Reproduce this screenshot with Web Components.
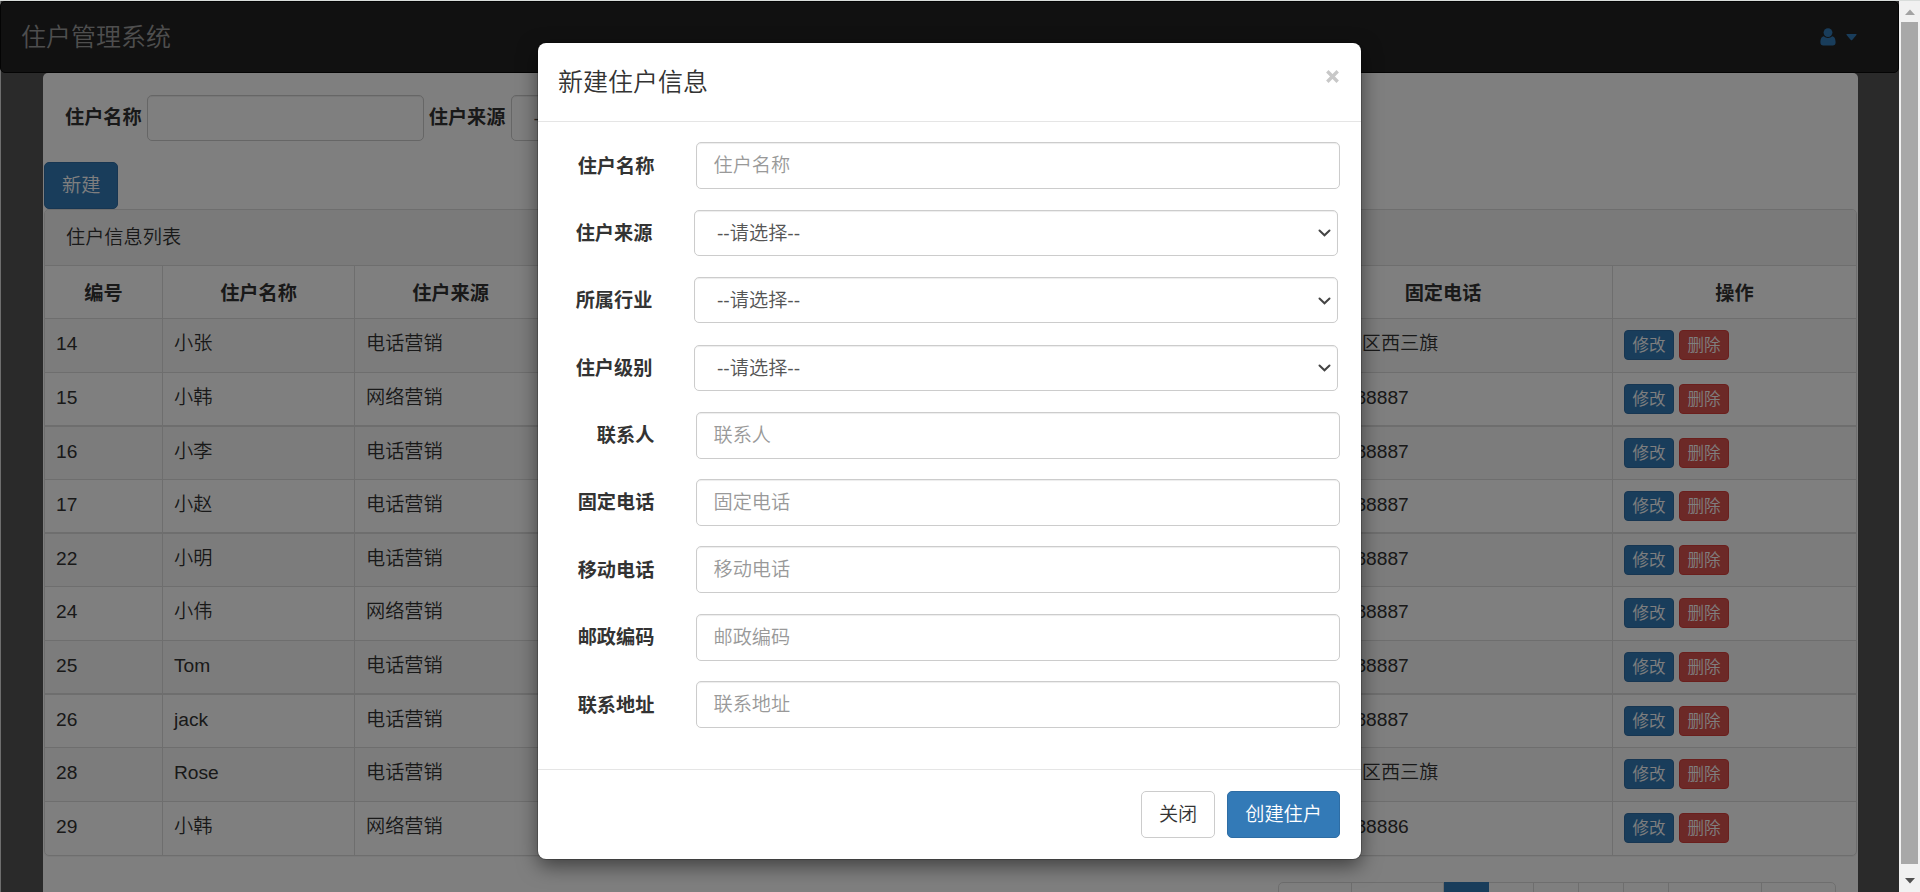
<!DOCTYPE html>
<html lang="zh-CN">
<head>
<meta charset="UTF-8">
<title>住户管理系统</title>
<style>
    html, body {
        margin: 0;
        height: 100%;
        overflow: hidden;
    }
    body {
        font-family: "Liberation Sans", "Noto Sans CJK SC", sans-serif;
        font-size: 19.2px;
        font-weight: 350;
        line-height: 27px;
        color: #333;
    }
</style>
</head>
<body>
<resident-app></resident-app>

<script>
class NavBar extends HTMLElement {
    connectedCallback() {
        this.attachShadow({ mode: 'open' });
        this.shadowRoot.innerHTML = `
            <style>
                :host {
                    display: flex;
                    flex: none;
                    align-items: center;
                    justify-content: space-between;
                    box-sizing: border-box;
                    height: 72px;
                    padding: 0 41px 0 20px;
                    background: #222;
                    border: 1px solid #080808;
                    border-radius: 5px;
                }
                .brand {
                    font-size: 25px;
                    color: #9d9d9d;
                }
                .user {
                    display: flex;
                    align-items: center;
                    gap: 10px;
                }
                svg {
                    display: block;
                    fill: #337ab7;
                }
            </style>
            <span class="brand"><slot></slot></span>
            <span class="user">
                <svg width="16" height="18" viewBox="0 0 16 18">
                    <circle cx="8" cy="4.6" r="4.4"/>
                    <path d="M3.9 8.2C1.2 8.6.4 11.3.4 14.2.4 16.4 1.5 17.5 3.3 17.5H12.7C14.5 17.5 15.6 16.4 15.6 14.2 15.6 11.3 14.8 8.6 12.1 8.2 11 9.3 9.6 9.9 8 9.9S5 9.3 3.9 8.2Z"/>
                </svg>
                <svg width="11" height="7" viewBox="0 0 11 7"><path d="M1 0h9q1 0 .4.9L6.2 6q-.7.6-1.4 0L.6.9Q0 0 1 0Z"/></svg>
            </span>
        `;
    }
}

class AppButton extends HTMLElement {
    connectedCallback() {
        this.attachShadow({ mode: 'open' });
        this.shadowRoot.innerHTML = `
            <style>
                :host {
                    display: inline-flex;
                }
                button {
                    box-sizing: border-box;
                    height: 47px;
                    padding: 0 17px;
                    font: inherit;
                    line-height: 1;
                    white-space: nowrap;
                    color: #333;
                    background: #fff;
                    border: 1px solid #ccc;
                    border-radius: 5px;
                }
                :host([kind="primary"]) button {
                    color: #fff;
                    background: #337ab7;
                    border-color: #2e6da4;
                }
                :host([kind="danger"]) button {
                    color: #fff;
                    background: #d9534f;
                    border-color: #d43f3a;
                }
                :host([size="xs"]) button {
                    width: 50px;
                    height: 30px;
                    padding: 0;
                    font-size: 16.5px;
                    border-radius: 4px;
                }
            </style>
            <button type="button"><slot></slot></button>
        `;
    }
}

class TextField extends HTMLElement {
    connectedCallback() {
        const hint = this.getAttribute('placeholder') || '';
        this.attachShadow({ mode: 'open' });
        this.shadowRoot.innerHTML = `
            <style>
                :host {
                    display: block;
                }
                input {
                    display: block;
                    box-sizing: border-box;
                    width: 100%;
                    height: var(--field-height, 47px);
                    padding: 1px 16.5px 0;
                    font: inherit;
                    color: #555;
                    background: #fff;
                    border: 1px solid #ccc;
                    border-radius: 5px;
                    box-shadow: inset 0 1px 1px rgba(0, 0, 0, .075);
                }
                input::placeholder {
                    color: #999;
                }
            </style>
            <input type="text" placeholder="${hint}">
        `;
    }
}

class SelectField extends HTMLElement {
    connectedCallback() {
        this.attachShadow({ mode: 'open' });
        this.shadowRoot.innerHTML = `
            <style>
                :host {
                    display: grid;
                    align-items: center;
                }
                select, svg {
                    grid-area: 1 / 1;
                }
                select {
                    appearance: none;
                    box-sizing: border-box;
                    width: 100%;
                    height: 46px;
                    padding: 1px 22px 0;
                    font: inherit;
                    color: #555;
                    background: #fff;
                    border: 1px solid #ccc;
                    border-radius: 5px;
                    box-shadow: inset 0 1px 1px rgba(0, 0, 0, .075);
                }
                svg {
                    justify-self: end;
                    margin: 1px 7px 0 0;
                    fill: none;
                    stroke: #444;
                    stroke-width: 2;
                    stroke-linecap: round;
                }
            </style>
            <select><option>--请选择--</option></select>
            <svg width="13" height="8" viewBox="0 0 13 8"><path d="M1.5 1.5 6.5 6.3 11.5 1.5"/></svg>
        `;
    }
}

class FormRow extends HTMLElement {
    connectedCallback() {
        this.attachShadow({ mode: 'open' });
        this.shadowRoot.innerHTML = `
            <style>
                :host {
                    display: grid;
                    grid-template-columns: 95.4px 644px;
                    column-gap: 41.6px;
                    align-items: center;
                    height: 47px;
                }
                /* select rows sit two pixels to the left of the inputs */
                :host([shifted]) {
                    margin-left: -2px;
                }
                label {
                    padding-top: 1px;
                    font-weight: 700;
                    text-align: right;
                }
            </style>
            <label>${this.getAttribute('label')}</label>
            <slot></slot>
        `;
    }
}

class SearchBar extends HTMLElement {
    connectedCallback() {
        this.attachShadow({ mode: 'open' });
        this.shadowRoot.innerHTML = `
            <style>
                :host {
                    --field-height: 46px;
                    display: flex;
                    align-items: center;
                    padding: 22px 20px 0 21px;
                    height: 46px;
                }
                label {
                    font-weight: 700;
                    margin-right: 5px;
                    padding-bottom: 2px;
                }
                text-field {
                    width: 277px;
                    margin-right: 5px;
                }
                select-field {
                    width: 200px;
                }
            </style>
            <label>住户名称</label><text-field></text-field>
            <label>住户来源</label><select-field></select-field>
        `;
    }
}

class ResidentTable extends HTMLElement {
    connectedCallback() {
        const area = '北京昌平区西三旗';
        const tel = '010-88888887';
        // id, name, source, phone, row height, bottom border
        const rows = [
            [14, '小张', '电话营销', area, 54, 1],
            [15, '小韩', '网络营销', tel, 54, 2],
            [16, '小李', '电话营销', tel, 53, 1],
            [17, '小赵', '电话营销', tel, 54, 2],
            [22, '小明', '电话营销', tel, 53, 1],
            [24, '小伟', '网络营销', tel, 54, 1],
            [25, 'Tom', '电话营销', tel, 54, 2],
            [26, 'jack', '电话营销', tel, 53, 1],
            [28, 'Rose', '电话营销', area, 54, 1],
            [29, '小韩', '网络营销', '010-88888886', 53, 0]
        ];
        const body = rows.map(([id, name, source, phone, height, line]) => `
            <div class="row" style="height: ${height}px; border-bottom-width: ${line}px">
                <span>${id}</span><span>${name}</span><span>${source}</span><span></span><span>${phone}</span>
                <span class="actions">
                    <app-button kind="primary" size="xs">修改</app-button>
                    <app-button kind="danger" size="xs">删除</app-button>
                </span>
            </div>`).join('');

        this.attachShadow({ mode: 'open' });
        this.shadowRoot.innerHTML = `
            <style>
                :host {
                    display: block;
                    box-sizing: border-box;
                    border: 1px solid #ddd;
                    border-radius: 5px;
                    box-shadow: 0 1px 1px rgba(0, 0, 0, .05);
                    overflow: hidden;
                }
                .heading {
                    box-sizing: border-box;
                    height: 56px;
                    padding: 14px 21px 0;
                    background: #f5f5f5;
                    border-bottom: 1px solid #ddd;
                }
                .row {
                    display: grid;
                    grid-template-columns: 118px 192px 192px 727px 339px 1fr;
                    box-sizing: border-box;
                    border-bottom: 1px solid #ddd;
                }
                .row span {
                    padding: 11px 11px 0;
                    border-right: 1px solid #ddd;
                }
                .row span:last-child {
                    border-right: 0;
                }
                .row:nth-child(odd) {
                    background: #f9f9f9;
                }
                .row.head {
                    height: 53px;
                    font-weight: 700;
                    text-align: center;
                    background: #fff;
                }
                .row.head span {
                    padding-top: 14px;
                }
                .actions {
                    display: flex;
                    gap: 5px;
                }
            </style>
            <div class="heading">住户信息列表</div>
            <div class="row head">
                <span>编号</span><span>住户名称</span><span>住户来源</span><span></span><span>固定电话</span><span>操作</span>
            </div>
            <div>${body}</div>
        `;
    }
}

class PagerBar extends HTMLElement {
    connectedCallback() {
        const widths = [73, 92, 45, 45, 45, 45, 45, 93, 73];
        this.attachShadow({ mode: 'open' });
        this.shadowRoot.innerHTML = `
            <style>
                :host {
                    display: flex;
                    align-self: flex-end;
                    margin: 26px 22px 0 0;
                    border: 1px solid #ddd;
                    border-radius: 5px;
                }
                i {
                    box-sizing: border-box;
                    height: 45px;
                    border-right: 1px solid #ddd;
                }
                i:last-child {
                    border-right: 0;
                }
                .active {
                    margin-top: -1px;
                    background: #337ab7;
                    border-color: #337ab7;
                }
            </style>
            ${widths.map((w, n) => `<i class="${n === 2 ? 'active' : ''}" style="width: ${w}px"></i>`).join('')}
        `;
    }
}

class ModalDialog extends HTMLElement {
    connectedCallback() {
        this.attachShadow({ mode: 'open' });
        this.shadowRoot.innerHTML = `
            <style>
                :host {
                    position: absolute;
                    inset: 1px 0 0 0;
                    display: flex;
                    justify-content: center;
                    align-items: flex-start;
                    background: rgba(0, 0, 0, .5);
                }
                .dialog {
                    display: flex;
                    flex-direction: column;
                    width: 823px;
                    height: 816px;
                    margin-top: 42px;
                    background: #fff;
                    border-radius: 8px;
                    box-shadow: 0 7px 20px rgba(0, 0, 0, .5), 0 0 0 1px rgba(0, 0, 0, .2);
                }
                header {
                    display: flex;
                    justify-content: space-between;
                    box-sizing: border-box;
                    height: 79px;
                    padding: 20px 22.5px 0 20px;
                    border-bottom: 1px solid #e5e5e5;
                }
                h4 {
                    margin: 2px 0 0;
                    font-size: 25px;
                    font-weight: 350;
                    line-height: 35px;
                }
                header svg {
                    margin-top: 6.5px;
                    stroke: #c8c8c8;
                    stroke-width: 3.4;
                }
                .fields {
                    display: flex;
                    flex-direction: column;
                    gap: 20.4px;
                    flex: 1;
                    padding: 20px 20px 0 21px;
                }
                footer {
                    display: flex;
                    justify-content: flex-end;
                    gap: 12px;
                    box-sizing: border-box;
                    height: 90px;
                    padding: 21px 21px 0;
                    border-top: 1px solid #e5e5e5;
                }
            </style>
            <div class="dialog">
                <header>
                    <h4>${this.getAttribute('heading')}</h4>
                    <svg width="13" height="13" viewBox="0 0 13 13"><path d="M1.3 1.3 11.7 11.7M11.7 1.3 1.3 11.7"/></svg>
                </header>
                <div class="fields"><slot></slot></div>
                <footer><slot name="footer"></slot></footer>
            </div>
        `;
    }
}

class PageScrollbar extends HTMLElement {
    connectedCallback() {
        this.attachShadow({ mode: 'open' });
        this.shadowRoot.innerHTML = `
            <style>
                :host {
                    display: grid;
                    grid-template-rows: 21px 1fr 28px;
                    justify-items: center;
                    align-items: center;
                    padding: 0 2px;
                    background: #f1f1f1;
                }
                .thumb {
                    width: 100%;
                    height: 100%;
                    background: #a8a8a8;
                }
                svg {
                    display: block;
                }
                svg:last-child {
                    margin-top: 6px;
                }
            </style>
            <svg width="10" height="6" viewBox="0 0 10 6"><path d="M0 6 5 .5 10 6Z" fill="#a3a3a3"/></svg>
            <div class="thumb"></div>
            <svg width="10" height="6" viewBox="0 0 10 6"><path d="M0 0 5 5.5 10 0Z" fill="#505050"/></svg>
        `;
    }
}

class ResidentApp extends HTMLElement {
    connectedCallback() {
        const field = (label) => `<form-row label="${label}"><text-field placeholder="${label}"></text-field></form-row>`;
        const choice = (label) => `<form-row label="${label}" shifted><select-field></select-field></form-row>`;
        this.attachShadow({ mode: 'open' });
        this.shadowRoot.innerHTML = `
            <style>
                :host {
                    display: grid;
                    grid-template-columns: 1899px 21px;
                    grid-template-rows: 891px;
                    box-sizing: border-box;
                    height: 892px;
                    border-top: 1px solid #d9dddb;
                    overflow: hidden;
                }
                .page {
                    display: flex;
                    flex-direction: column;
                    min-height: 0;
                    overflow: hidden;
                    background: linear-gradient(to right, #ddd 1px, #555 1px);
                }
                .content {
                    display: flex;
                    flex-direction: column;
                    flex: none;
                    height: 860px;
                    margin: 0 41px 0 43px;
                    padding-left: 1px;
                    background: #fff;
                    border-radius: 5px;
                }
                .create {
                    align-self: flex-start;
                    margin: 21px 0 0;
                }
                resident-table {
                    margin: 0 1px 0 0;
                }
                modal-dialog {
                    width: 1899px;
                }
            </style>
            <div class="page">
                <nav-bar>住户管理系统</nav-bar>
                <div class="content">
                    <search-bar></search-bar>
                    <app-button class="create" kind="primary">新建</app-button>
                    <resident-table></resident-table>
                    <pager-bar></pager-bar>
                </div>
            </div>
            <page-scrollbar></page-scrollbar>
            <modal-dialog heading="新建住户信息">
                ${field('住户名称')}
                ${['住户来源', '所属行业', '住户级别'].map(choice).join('')}
                ${['联系人', '固定电话', '移动电话', '邮政编码', '联系地址'].map(field).join('')}
                <app-button slot="footer">关闭</app-button>
                <app-button slot="footer" kind="primary">创建住户</app-button>
            </modal-dialog>
        `;
    }
}

customElements.define('nav-bar', NavBar);
customElements.define('app-button', AppButton);
customElements.define('text-field', TextField);
customElements.define('select-field', SelectField);
customElements.define('form-row', FormRow);
customElements.define('search-bar', SearchBar);
customElements.define('resident-table', ResidentTable);
customElements.define('pager-bar', PagerBar);
customElements.define('modal-dialog', ModalDialog);
customElements.define('page-scrollbar', PageScrollbar);
customElements.define('resident-app', ResidentApp);
</script>
</body>
</html>
